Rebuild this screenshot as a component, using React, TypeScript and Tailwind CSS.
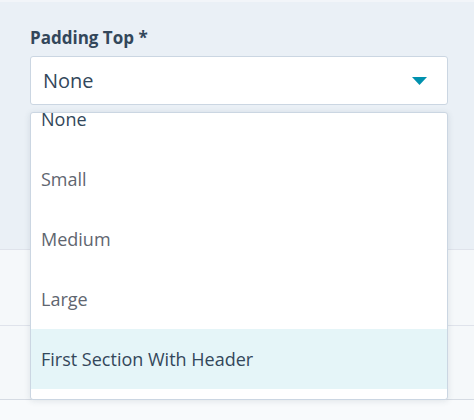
import React from 'react';

const options = ['None', 'Small', 'Medium', 'Large', 'First Section With Header'];

export default function App() {
  const font = { fontFamily: '"Open Sans", "Noto Sans", Arial, sans-serif' };

  return (
    <div className="relative w-[474px] h-[420px] overflow-hidden bg-[#f5f8fa]" style={font}>
      {/* form panel */}
      <div className="h-[250px] bg-[#eaf0f6] border-b border-[#dfe3eb] px-[30px] pt-[24px] border-t-2 border-t-[#f2f5f9]">
        <label className="block text-[17px] leading-[23px] font-bold text-[#33475b]">Padding Top *</label>
        <div className="mt-[7px] h-[49px] w-[418px] bg-white border border-[#cbd6e2] rounded-[3px] flex items-center justify-between pl-[12px] pr-[20px]">
          <span className="text-[20px] text-[#33475b]">None</span>
          <svg width="15" height="8" viewBox="0 0 15 8">
            <path d="M0 0 L15 0 L7.5 8 Z" fill="#0091ae" />
          </svg>
        </div>
      </div>
      <div className="h-[76px] bg-[#f5f8fa] border-b border-[#dfe3eb]" />
      <div className="h-[74px] bg-[#f5f8fa] border-b border-[#d5dbe3]" />
      <div className="h-[20px] bg-[#f8fafc]" />

      {/* open menu, scrolled a little */}
      <div className="absolute left-[30px] top-[112px] w-[418px] h-[288px] bg-white border border-[#cbd6e2] rounded-[3px] shadow-[0_1px_6px_rgba(45,62,80,0.12)] overflow-hidden">
        <div className="-mt-[24px]">
          {options.map((o, i) => (
            <div
              key={o}
              className={
                'h-[60px] flex items-center pl-[10px] text-[18px] ' +
                (i === 4 ? 'bg-[#e5f5f8] text-[#33475b]' : i === 0 ? 'text-[#33475b]' : 'text-[#5f6670]')
              }
            >
              {o}
            </div>
          ))}
        </div>
      </div>
    </div>
  );
}
